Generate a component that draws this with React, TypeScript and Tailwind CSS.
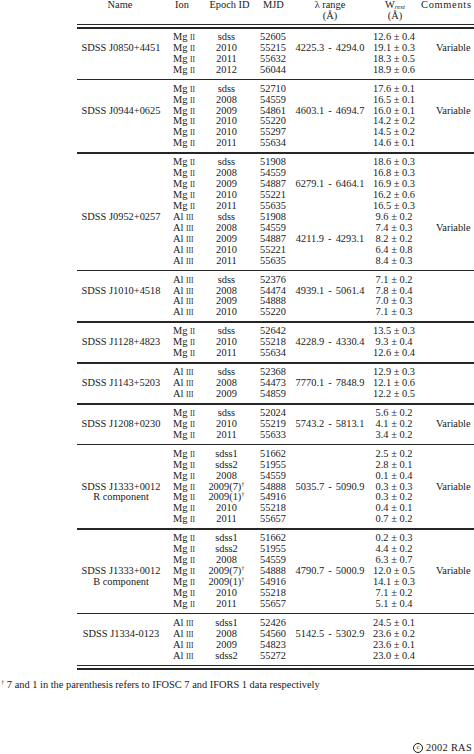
import React from "react";

type Line = [ion: "Mg" | "Al", epoch: string, mjd: string, w: string];

type Group = {
  name: string;
  sub?: string;
  nameRow: number;
  ranges: { row: number; text: string }[];
  commentRow?: number;
  rows: Line[];
};

const groups: Group[] = [
  {
    name: "SDSS J0850+4451",
    nameRow: 1,
    ranges: [{ row: 1, text: "4225.3 - 4294.0" }],
    commentRow: 1,
    rows: [
      ["Mg", "sdss", "52605", "12.6 ± 0.4"],
      ["Mg", "2010", "55215", "19.1 ± 0.3"],
      ["Mg", "2011", "55632", "18.3 ± 0.5"],
      ["Mg", "2012", "56044", "18.9 ± 0.6"],
    ],
  },
  {
    name: "SDSS J0944+0625",
    nameRow: 2,
    ranges: [{ row: 2, text: "4603.1 - 4694.7" }],
    commentRow: 2,
    rows: [
      ["Mg", "sdss", "52710", "17.6 ± 0.1"],
      ["Mg", "2008", "54559", "16.5 ± 0.1"],
      ["Mg", "2009", "54861", "16.0 ± 0.1"],
      ["Mg", "2010", "55220", "14.2 ± 0.2"],
      ["Mg", "2010", "55297", "14.5 ± 0.2"],
      ["Mg", "2011", "55634", "14.6 ± 0.1"],
    ],
  },
  {
    name: "SDSS J0952+0257",
    nameRow: 5,
    ranges: [
      { row: 2, text: "6279.1 - 6464.1" },
      { row: 7, text: "4211.9 - 4293.1" },
    ],
    commentRow: 6,
    rows: [
      ["Mg", "sdss", "51908", "18.6 ± 0.3"],
      ["Mg", "2008", "54559", "16.8 ± 0.3"],
      ["Mg", "2009", "54887", "16.9 ± 0.3"],
      ["Mg", "2010", "55221", "16.2 ± 0.6"],
      ["Mg", "2011", "55635", "16.5 ± 0.3"],
      ["Al", "sdss", "51908", "9.6 ± 0.2"],
      ["Al", "2008", "54559", "7.4 ± 0.3"],
      ["Al", "2009", "54887", "8.2 ± 0.2"],
      ["Al", "2010", "55221", "6.4 ± 0.8"],
      ["Al", "2011", "55635", "8.4 ± 0.3"],
    ],
  },
  {
    name: "SDSS J1010+4518",
    nameRow: 1,
    ranges: [{ row: 1, text: "4939.1 - 5061.4" }],
    rows: [
      ["Al", "sdss", "52376", "7.1 ± 0.2"],
      ["Al", "2008", "54474", "7.8 ± 0.4"],
      ["Al", "2009", "54888", "7.0 ± 0.3"],
      ["Al", "2010", "55220", "7.1 ± 0.3"],
    ],
  },
  {
    name: "SDSS J1128+4823",
    nameRow: 1,
    ranges: [{ row: 1, text: "4228.9 - 4330.4" }],
    rows: [
      ["Mg", "sdss", "52642", "13.5 ± 0.3"],
      ["Mg", "2010", "55218", "9.3 ± 0.4"],
      ["Mg", "2011", "55634", "12.6 ± 0.4"],
    ],
  },
  {
    name: "SDSS J1143+5203",
    nameRow: 1,
    ranges: [{ row: 1, text: "7770.1 - 7848.9" }],
    rows: [
      ["Al", "sdss", "52368", "12.9 ± 0.3"],
      ["Al", "2008", "54473", "12.1 ± 0.6"],
      ["Al", "2009", "54859", "12.2 ± 0.5"],
    ],
  },
  {
    name: "SDSS J1208+0230",
    nameRow: 1,
    ranges: [{ row: 1, text: "5743.2 - 5813.1" }],
    commentRow: 1,
    rows: [
      ["Mg", "sdss", "52024", "5.6 ± 0.2"],
      ["Mg", "2010", "55219", "4.1 ± 0.2"],
      ["Mg", "2011", "55633", "3.4 ± 0.2"],
    ],
  },
  {
    name: "SDSS J1333+0012",
    sub: "R component",
    nameRow: 3,
    ranges: [{ row: 3, text: "5035.7 - 5090.9" }],
    commentRow: 3,
    rows: [
      ["Mg", "sdss1", "51662", "2.5 ± 0.2"],
      ["Mg", "sdss2", "51955", "2.8 ± 0.1"],
      ["Mg", "2008", "54559", "0.1 ± 0.4"],
      ["Mg", "2009(7)", "54888", "0.3 ± 0.3"],
      ["Mg", "2009(1)", "54916", "0.3 ± 0.2"],
      ["Mg", "2010", "55218", "0.4 ± 0.1"],
      ["Mg", "2011", "55657", "0.7 ± 0.2"],
    ],
  },
  {
    name: "SDSS J1333+0012",
    sub: "B component",
    nameRow: 3,
    ranges: [{ row: 3, text: "4790.7 - 5000.9" }],
    commentRow: 3,
    rows: [
      ["Mg", "sdss1", "51662", "0.2 ± 0.3"],
      ["Mg", "sdss2", "51955", "4.4 ± 0.2"],
      ["Mg", "2008", "54559", "6.3 ± 0.7"],
      ["Mg", "2009(7)", "54888", "12.0 ± 0.5"],
      ["Mg", "2009(1)", "54916", "14.1 ± 0.3"],
      ["Mg", "2010", "55218", "7.1 ± 0.2"],
      ["Mg", "2011", "55657", "5.1 ± 0.4"],
    ],
  },
  {
    name: "SDSS J1334-0123",
    nameRow: 1,
    ranges: [{ row: 1, text: "5142.5 - 5302.9" }],
    rows: [
      ["Al", "sdss1", "52426", "24.5 ± 0.1"],
      ["Al", "2008", "54560", "23.6 ± 0.2"],
      ["Al", "2009", "54823", "23.6 ± 0.1"],
      ["Al", "sdss2", "55272", "23.0 ± 0.4"],
    ],
  },
];

const cols = "grid grid-cols-[88px_38px_47px_43px_74px_54px_76px]";

function Ion({ ion }: { ion: "Mg" | "Al" }) {
  return (
    <span>
      {ion} <span className="text-[7.4px]">{ion === "Mg" ? "II" : "III"}</span>
    </span>
  );
}

function Epoch({ value }: { value: string }) {
  if (value.startsWith("2009(")) {
    return (
      <span>
        {value}
        <sup className="text-[6.5px] -top-[4px] relative align-baseline">†</sup>
      </span>
    );
  }
  return <span>{value}</span>;
}

function Rule() {
  return <div className="h-[1.5px] bg-[#262626]" />;
}

function DoubleRule() {
  return (
    <div className="flex flex-col gap-[2px]">
      <div className="h-[1.5px] bg-[#262626]" />
      <div className="h-[1.5px] bg-[#262626]" />
    </div>
  );
}

function GroupRows({ group }: { group: Group }) {
  return (
    <div className="pt-[3.4px] pb-[3.1px]">
      {group.rows.map((r, i) => {
        const range = group.ranges.find((x) => x.row === i);
        let name = "";
        if (i === group.nameRow) name = group.name;
        if (group.sub && i === group.nameRow + 1) name = group.sub;
        return (
          <div key={i} className={`${cols} h-[10.95px] leading-[10.95px]`}>
            <div className="text-center whitespace-nowrap">{name}</div>
            <div className="pl-[8px] whitespace-nowrap">
              <Ion ion={r[0]} />
            </div>
            <div className="text-center whitespace-nowrap">
              <Epoch value={r[1]} />
            </div>
            <div className="pl-[10px]">{r[2]}</div>
            <div className="text-center whitespace-nowrap [word-spacing:1.5px]">
              {range ? range.text : ""}
            </div>
            <div className="text-center whitespace-nowrap">{r[3]}</div>
            <div className="pl-[15px] whitespace-nowrap">
              {group.commentRow === i ? "Variable" : ""}
            </div>
          </div>
        );
      })}
    </div>
  );
}

export default function App() {
  return (
    <div className="w-[474px] h-[754px] overflow-hidden bg-white text-[#1a1a1a] font-['Liberation_Serif',serif] text-[10.4px]">
      <div className="w-[474px]">
        <div className="ml-[77px] w-[397px] overflow-hidden">
          <div className={`${cols} leading-[10.5px] pb-[2.5px]`}>
            <div className="text-center pr-[2px]">Name</div>
            <div className="pl-[10px]">Ion</div>
            <div className="text-center whitespace-nowrap pl-[6px]">Epoch ID</div>
            <div className="pl-[13px]">MJD</div>
            <div className="flex flex-col items-center">
              <span>λ range</span>
              <span>(Å)</span>
            </div>
            <div className="flex flex-col items-center pl-[2px]">
              <span>
                W<sub className="text-[7px] italic relative top-[1px] align-baseline">rest</sub>
              </span>
              <span>(Å)</span>
            </div>
            <div className="whitespace-nowrap tracking-[0.7px]">Comments</div>
          </div>
          <DoubleRule />
          {groups.map((g, i) => (
            <div key={i}>
              {i > 0 && <Rule />}
              <GroupRows group={g} />
            </div>
          ))}
          <DoubleRule />
        </div>
        <div className="pt-[9.5px] pl-[1px] leading-[11px] whitespace-nowrap">
          <sup className="text-[6.5px] relative -top-[4px] align-baseline">†</sup>{" "}
          7 and 1 in the parenthesis refers to IFOSC 7 and IFORS 1 data respectively
        </div>
        <div className="pt-[52px] pl-[413px] leading-[11px] whitespace-nowrap flex items-center gap-[3px]">
          <span className="inline-flex items-center justify-center w-[10px] h-[10px] rounded-full border border-[#1a1a1a] text-[7px] leading-none">
            c
          </span>
          <span className="tracking-[0.3px]">2002 RAS</span>
        </div>
      </div>
    </div>
  );
}
